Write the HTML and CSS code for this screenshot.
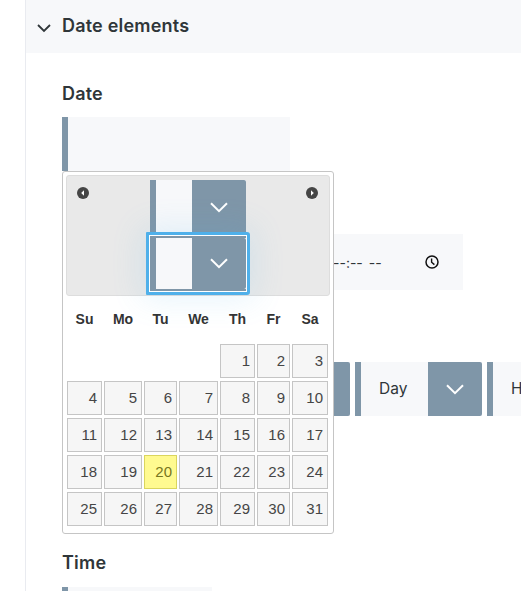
FILE: index.html
```html
<!doctype html>
<html>
<head>
<meta charset="utf-8">
<title>Date elements</title>
<link rel="stylesheet" href="styles.css">
</head>
<body>
<section class="accordion">
  <header class="accordion-head">
    <svg class="accordion-icon" width="14" height="9" viewBox="0 0 14 9"><path d="M1 1l6 6 6-6" fill="none" stroke="#2f3639" stroke-width="1.8"/></svg>
    <h2>Date elements</h2>
  </header>
  <div class="accordion-body">
    <div class="field field-date">
      <h3>Date</h3>
      <div class="input input-date"></div>

      <div class="datepicker">
        <div class="dp-head">
          <svg class="dp-nav dp-prev" width="12" height="12" viewBox="0 0 12 12"><circle cx="6" cy="6" r="6" fill="#454545"/><path d="M7 3.2v5.6L4.2 6z" fill="#fff"/></svg>
          <div class="dp-selects">
            <div class="select select-dp">
              <span class="select-value"></span>
              <span class="select-arrow"><svg width="18" height="11" viewBox="0 0 18 11"><path d="M1 1.2l8 8 8-8" fill="none" stroke="#fff" stroke-width="2"/></svg></span>
            </div>
            <div class="select select-dp is-focus">
              <span class="select-value"></span>
              <span class="select-arrow"><svg width="18" height="11" viewBox="0 0 18 11"><path d="M1 1.2l8 8 8-8" fill="none" stroke="#fff" stroke-width="2"/></svg></span>
            </div>
          </div>
          <svg class="dp-nav dp-next" width="12" height="12" viewBox="0 0 12 12"><circle cx="6" cy="6" r="6" fill="#454545"/><path d="M5 3.2v5.6L7.8 6z" fill="#fff"/></svg>
        </div>
        <div class="dp-grid dp-week">
          <span>Su</span><span>Mo</span><span>Tu</span><span>We</span><span>Th</span><span>Fr</span><span>Sa</span>
        </div>
        <div class="dp-grid dp-days">
          <a class="day day-first">1</a><a class="day">2</a><a class="day">3</a>
          <a class="day">4</a><a class="day">5</a><a class="day">6</a><a class="day">7</a><a class="day">8</a><a class="day">9</a><a class="day">10</a>
          <a class="day">11</a><a class="day">12</a><a class="day">13</a><a class="day">14</a><a class="day">15</a><a class="day">16</a><a class="day">17</a>
          <a class="day">18</a><a class="day">19</a><a class="day today">20</a><a class="day">21</a><a class="day">22</a><a class="day">23</a><a class="day">24</a>
          <a class="day">25</a><a class="day">26</a><a class="day">27</a><a class="day">28</a><a class="day">29</a><a class="day">30</a><a class="day">31</a>
        </div>
      </div>
    </div>

    <div class="field field-datetime">
      <div class="input input-datetime">
        <span>--:-- --</span>
        <svg width="14" height="14" viewBox="0 0 14 14"><circle cx="7" cy="7" r="6" fill="none" stroke="#111" stroke-width="1.5"/><path d="M6.6 3.5V7.2L9.4 9.6" fill="none" stroke="#111" stroke-width="1.4"/></svg>
      </div>
    </div>

    <div class="field field-parts">
      <div class="select-row">
        <div class="select select-part year"><span class="select-value"></span><span class="select-arrow"></span></div>
        <div class="select select-part month"><span class="select-value"></span><span class="select-arrow"></span></div>
        <div class="select select-part"><span class="select-value">Day</span><span class="select-arrow"><svg width="18" height="11" viewBox="0 0 18 11"><path d="M1 1.2l8 8 8-8" fill="none" stroke="#fff" stroke-width="2"/></svg></span></div>
        <div class="select select-part"><span class="select-value">Hour</span><span class="select-arrow"></span></div>
      </div>
    </div>

    <div class="field field-time">
      <h3>Time</h3>
      <div class="input input-time"></div>
    </div>
  </div>
</section>
</body>
</html>
```

FILE: styles.css
```css
html, body {
  margin: 0;
  padding: 0;
  height: 591px;
  overflow: hidden;
  background: #fff;
}

body {
  font-family: Inter, "Open Sans", sans-serif;
  color: #2f3639;
  padding-left: 25px;
}

h2, h3 {
  margin: 0;
  font-weight: 600;
  font-size: 18px;
  line-height: 22px;
  letter-spacing: .2px;
  color: #2f3639;
}

.accordion {
  box-sizing: border-box;
  width: 496px;
  height: 591px;
  overflow: hidden;
  border-left: 1px solid #e9ebf0;
}

.accordion-head {
  display: flex;
  align-items: center;
  gap: 11px;
  height: 53px;
  padding-left: 11px;
  background: #f7f8fa;
}

.accordion-head h2 {
  margin-bottom: 2px;
}

.accordion-icon {
  margin-top: 3px;
}

.accordion-body {
  padding: 30px 0 0 36px;
}

.field h3 {
  margin-bottom: 13px;
}
.field-date h3 {
  margin-bottom: 12px;
}

/* inputs */
.input {
  background: #f7f8fa;
}
.input-date {
  width: 222px;
  height: 54px;
  border-left: 6px solid #7f96a8;
}
.input-time {
  width: 144px;
  height: 54px;
  border-left: 6px solid #7f96a8;
}
.input-datetime {
  display: flex;
  align-items: center;
  justify-content: space-between;
  width: 401px;
  height: 56px;
  box-sizing: border-box;
  padding: 0 24px 0 271px;
  font-size: 14px;
  word-spacing: 2px;
  color: #2f3639;
}

.field-date {
  position: relative;
}
.field-datetime {
  margin-top: 63px;
}
.field-parts {
  margin-top: 72px;
}
.field-time {
  margin-top: 136px;
}

/* selects */
.select {
  display: flex;
  box-sizing: border-box;
  border-left: 6px solid #7f96a8;
  background: #f7f8fa;
}
.select-value {
  flex: 1;
}
.select-arrow {
  display: flex;
  align-items: center;
  justify-content: center;
  width: 54px;
  background: #7f96a8;
  border-radius: 0 2px 2px 0;
}
.select-row {
  display: flex;
  gap: 5px;
  overflow: hidden;
}
.select-part {
  flex: none;
  width: 127px;
  height: 54px;
  font-size: 15.5px;
}
.select-part .select-value {
  padding-left: 18px;
  line-height: 54px;
}
.select-part.year {
  width: 138px;
}
.select-part.month {
  width: 145px;
}

/* datepicker popup */
.datepicker {
  position: absolute;
  left: 0;
  top: 88px;
  z-index: 2;
  width: 272px;
  height: 363px;
  box-sizing: border-box;
  padding: 3px;
  background: #fff;
  border: 1px solid #c5c5c5;
  border-radius: 3px;
  font-family: "Liberation Sans", Arial, sans-serif;
}
.dp-head {
  position: relative;
  display: flex;
  justify-content: center;
  height: 121px;
  box-sizing: border-box;
  padding-top: 4px;
  background: #e9e9e9;
  border: 1px solid #dddddd;
  border-radius: 3px;
}
.dp-nav {
  position: absolute;
  top: 11px;
}
.dp-prev {
  left: 10px;
}
.dp-next {
  right: 11px;
}
.dp-selects {
  display: flex;
  flex-direction: column;
  gap: 2px;
}
.select-dp {
  width: 96px;
  height: 54px;
}
.select-dp.is-focus {
  position: relative;
  height: 55px;
  border-top: 2px solid #7f96a8;
  border-bottom: 2px solid #7f96a8;
  box-shadow: 0 0 0 1px #fff, 0 0 32px 8px rgba(79, 176, 234, .14);
}
.select-dp.is-focus::after {
  content: "";
  position: absolute;
  top: -6px;
  right: -4px;
  bottom: -6px;
  left: -10px;
  border: 3px solid #4fb0ea;
  border-radius: 1px 3px 3px 1px;
}

.dp-grid {
  display: grid;
  grid-template-columns: 35px 38px 33px 39px 35px 33px 36px;
  column-gap: 2px;
  margin-left: 1px;
}
.dp-week {
  margin-top: 14px;
  font-size: 14px;
  font-weight: 700;
  line-height: 18px;
  text-align: center;
  color: #333;
}
.dp-days {
  margin-top: 16px;
  row-gap: 3px;
}
.day {
  height: 34px;
  box-sizing: border-box;
  padding-right: 4px;
  background: #f6f6f6;
  border: 1px solid #c5c5c5;
  font-size: 15px;
  line-height: 32px;
  text-align: right;
  color: #454545;
}
.day-first {
  grid-column: 5;
}
.today {
  background: #fffa90;
  border-color: #dad55e;
  color: #777620;
}
```
